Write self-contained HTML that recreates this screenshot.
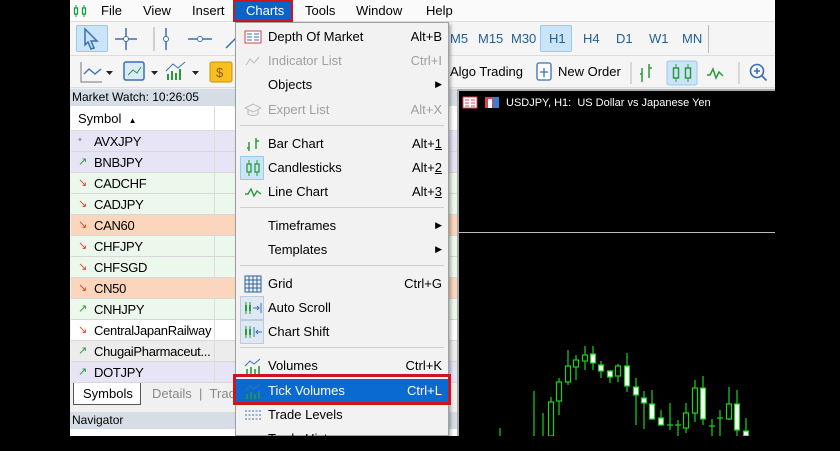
<!DOCTYPE html><html><head><style>
*{margin:0;padding:0;box-sizing:border-box}
body{width:840px;height:436px;background:#000;position:relative;overflow:hidden;font-family:"Liberation Sans","DejaVu Sans",sans-serif;font-size:13px;color:#000}
.a{position:absolute}
.app{left:70px;top:0;width:705px;height:436px;background:#f0f0f0}
.mi{top:3px;font-size:13px}
.row{left:71px;width:386px;height:21px;border-bottom:1px solid #d8d8d8}
.row span{position:absolute;left:23px;top:3px;letter-spacing:-0.3px}
.row i{position:absolute;left:7px;top:3px;font-style:normal;font-size:11px}
.up{color:#2a9a3a}.dn{color:#e0442a}
.menu{left:235px;top:22px;width:214px;height:414px;background:#f2f2f2;border:1px solid #a0a0a0;box-shadow:2px 2px 3px rgba(0,0,0,.3)}
.it{position:absolute;left:0;width:212px;height:24px}
.it .t{position:absolute;left:32px;top:4px}
.it .k{position:absolute;right:6px;top:4px}
.dis{color:#a0a0a0}
.sep{position:absolute;left:4px;width:204px;height:1px;background:#cfcfcf}
.tf{top:26px;height:26px;font-size:13px;color:#1f5f96;padding:5px 6px}
</style></head><body>
<div class="a app"></div>
<div class="a" style="left:70px;top:0;width:705px;height:22px;background:#fafafa;border-bottom:1px solid #ddd"></div>
<svg class="a" style="left:73px;top:4px" width="16" height="14"><path d="M3 1v12M11 1v12" stroke="#1a9a3a"/><rect x="1.5" y="4" width="3" height="6" fill="#fff" stroke="#1a9a3a" stroke-width="1.3"/><rect x="9.5" y="4" width="3" height="6" fill="#fff" stroke="#1a9a3a" stroke-width="1.3"/></svg>
<div class="a mi" style="left:101px">File</div>
<div class="a mi" style="left:143px">View</div>
<div class="a mi" style="left:192px">Insert</div>
<div class="a" style="left:233px;top:0;width:60px;height:22px;background:#0a64c8;border:2px solid #d0141e"></div>
<div class="a mi" style="left:246px;color:#fff">Charts</div>
<div class="a mi" style="left:305px">Tools</div>
<div class="a mi" style="left:356px">Window</div>
<div class="a mi" style="left:426px">Help</div>
<div class="a" style="left:70px;top:22px;width:705px;height:34px;background:#f5f5f5;border-bottom:1px solid #ddd"></div>
<div class="a" style="left:76px;top:25px;width:32px;height:27px;background:#cce4f7;border:1px solid #99c9ef;border-radius:2px"></div>
<svg class="a" style="left:70px;top:22px" width="170" height="34"><path d="M15 7 L27 19 L21 19 L24 26 L21 27 L18 20 L15 23Z" fill="none" stroke="#3a6fb0" stroke-width="1.5"/><path d="M56 6V28M45 17H67" stroke="#3a6fb0" stroke-width="1.5"/><circle cx="56" cy="17" r="2.5" fill="#fff" stroke="#3a6fb0"/><path d="M84 5V29" stroke="#aaa"/><path d="M96 6V28" stroke="#3a6fb0" stroke-width="1.5"/><circle cx="96" cy="17" r="2.5" fill="#fff" stroke="#3a6fb0"/><path d="M118 17H142" stroke="#3a6fb0" stroke-width="1.5"/><circle cx="130" cy="17" r="2.5" fill="#fff" stroke="#3a6fb0"/><path d="M156 26L168 14" stroke="#3a6fb0" stroke-width="1.5"/></svg>
<div class="a tf" style="left:444px">M5</div><div class="a tf" style="left:472px">M15</div><div class="a tf" style="left:505px">M30</div>
<div class="a" style="left:540px;top:25px;width:32px;height:27px;background:#cce4f7;border:1px solid #99c9ef;border-radius:2px"></div>
<div class="a tf" style="left:543px">H1</div><div class="a tf" style="left:577px">H4</div><div class="a tf" style="left:610px">D1</div><div class="a tf" style="left:643px">W1</div><div class="a tf" style="left:676px">MN</div>
<div class="a" style="left:708px;top:25px;width:1px;height:28px;background:#bbb"></div>
<div class="a" style="left:70px;top:56px;width:705px;height:32px;background:#f5f5f5;border-bottom:1px solid #ddd"></div>
<svg class="a" style="left:70px;top:56px" width="170" height="32"><path d="M11 6V26H32" stroke="#777" fill="none"/><path d="M14 18L19 13L25 18L31 13" stroke="#3a6fb0" fill="none" stroke-width="1.3"/><path d="M36 15h7l-3.5 4z" fill="#222"/><rect x="54" y="6" width="20" height="18" rx="2" fill="#dceaf7" stroke="#3a6fb0" stroke-width="1.5"/><path d="M58 19L63 14L67 17L71 11" stroke="#2a9a3a" fill="none"/><path d="M81 15h7l-3.5 4z" fill="#222"/><path d="M98 24V18M102 24V15M106 24V17M110 24V13" stroke="#2a9a3a" stroke-width="2"/><path d="M96 15L103 8L108 12L115 6" stroke="#3a6fb0" fill="none"/><path d="M122 15h7l-3.5 4z" fill="#222"/><rect x="140" y="6" width="22" height="20" rx="2" fill="#f5c020" stroke="#d09000"/><text x="146" y="21" font-size="13" fill="#9a5a00" font-family="Liberation Sans">$</text></svg>
<div class="a" style="left:450px;top:64px">Algo Trading</div>
<svg class="a" style="left:535px;top:60px" width="240" height="26"><rect x="2" y="3" width="14" height="17" rx="2" fill="#fff" stroke="#3a6fb0" stroke-width="1.3"/><path d="M9 8v9M5 12h8" stroke="#3a6fb0" stroke-width="1.3"/><path d="M96 2v22" stroke="#bbb"/><path d="M107 8v14M105 14h2M114 4v14M114 8h3" stroke="#2a9a3a" stroke-width="1.5"/><rect x="132" y="1" width="30" height="24" rx="2" fill="#cce4f7" stroke="#99c9ef"/><path d="M141 4v18M153 4v18" stroke="#2a9a3a"/><rect x="138.5" y="8" width="5" height="10" fill="#cce4f7" stroke="#2a9a3a" stroke-width="1.5"/><rect x="150.5" y="8" width="5" height="10" fill="#cce4f7" stroke="#2a9a3a" stroke-width="1.5"/><path d="M172 15h3l3-6l3 9l3-6l4 4" stroke="#2a9a3a" fill="none" stroke-width="1.5"/><path d="M204 2v22" stroke="#bbb"/><circle cx="222" cy="11" r="6.5" fill="none" stroke="#3a6fb0" stroke-width="1.6"/><path d="M226.5 15.5l5 5M219 11h6M222 8v6" stroke="#3a6fb0" stroke-width="1.6"/></svg>
<div class="a" style="left:558px;top:64px">New Order</div>
<div class="a" style="left:70px;top:89px;width:387px;height:17px;background:#d6dde6"></div>
<div class="a" style="left:72px;top:90px;font-size:12px">Market Watch: 10:26:05</div>
<div class="a" style="left:71px;top:106px;width:386px;height:25px;background:#fff;border-bottom:1px solid #ddd"></div>
<div class="a" style="left:78px;top:111px">Symbol &nbsp;<span style="font-size:8px">▲</span></div>
<div class="a row" style="top:131px;background:#e6e4f5"><i style="color:#999">•</i><span>AVXJPY</span></div>
<div class="a row" style="top:152px;background:#e6e4f5"><i class="up">↗</i><span>BNBJPY</span></div>
<div class="a row" style="top:173px;background:#edf8ed"><i class="dn">↘</i><span>CADCHF</span></div>
<div class="a row" style="top:194px;background:#edf8ed"><i class="dn">↘</i><span>CADJPY</span></div>
<div class="a row" style="top:215px;background:#fbd6bc"><i class="dn">↘</i><span>CAN60</span></div>
<div class="a row" style="top:236px;background:#edf8ed"><i class="dn">↘</i><span>CHFJPY</span></div>
<div class="a row" style="top:257px;background:#edf8ed"><i class="dn">↘</i><span>CHFSGD</span></div>
<div class="a row" style="top:278px;background:#fbd6bc"><i class="dn">↘</i><span>CN50</span></div>
<div class="a row" style="top:299px;background:#edf8ed"><i class="up">↗</i><span>CNHJPY</span></div>
<div class="a row" style="top:320px;background:#fff"><i class="dn">↘</i><span>CentralJapanRailway</span></div>
<div class="a row" style="top:341px;background:#ececec"><i class="up">↗</i><span>ChugaiPharmaceut...</span></div>
<div class="a row" style="top:362px;background:#e6e4f5"><i class="up">↗</i><span>DOTJPY</span></div>
<div class="a" style="left:214px;top:106px;width:1px;height:277px;background:#ddd"></div>
<div class="a" style="left:70px;top:383px;width:387px;height:24px;background:#f0f0f0"></div>
<div class="a" style="left:73px;top:383px;width:68px;height:22px;background:#fff;border:1px solid #555;border-top:none"></div>
<div class="a" style="left:83px;top:386px">Symbols</div>
<div class="a" style="left:152px;top:386px;color:#888">Details &nbsp;| &nbsp;Trad</div>
<div class="a" style="left:70px;top:412px;width:387px;height:17px;background:#d6dde6"></div>
<div class="a" style="left:72px;top:413px;font-size:12px">Navigator</div>
<div class="a" style="left:70px;top:429px;width:387px;height:7px;background:#fff"></div>
<div class="a" style="left:457px;top:89px;width:318px;height:347px;background:#000;border-left:2px solid #aaa;border-top:2px solid #aaa"></div>
<div class="a" style="left:459px;top:232px;width:316px;height:1px;background:#bbb"></div>
<svg class="a" style="left:462px;top:96px" width="40" height="14"><rect x="1" y="1" width="14" height="11" fill="#fff" stroke="#e04050"/><path d="M3 4h4M3 7h4M3 10h4M9 4h4M9 7h4M9 10h4" stroke="#e04050"/><rect x="23" y="1" width="14" height="11" fill="#e04050"/><rect x="26" y="3" width="4" height="9" fill="#fff"/><rect x="31" y="1" width="6" height="11" fill="#3a7fd0"/></svg>
<div class="a" style="left:506px;top:97px;color:#fff;font-size:11px">USDJPY, H1: &nbsp;US Dollar vs Japanese Yen</div>
<svg class="a" style="left:0;top:0" width="840" height="436" fill="none" stroke="#1dd11d" stroke-width="1.2">
<path d="M500 428v8M534 391v45M543 413v23M551 397v39M559 378v37M568 350v35M576 355v25M585 346v24M593 346v24M601 361v17M610 370v13M618 364v18M627 353v39M636 378v47M644 391v38M652 390v30M661 410v14M670 403v27M678 420v16M686 403v30M695 380v42M703 376v49M712 419v17M720 410v26M729 387v33M737 390v46M746 418v18"/>
<g fill="#000"><rect x="548.5" y="402" width="5" height="34"/><rect x="556.5" y="382" width="5" height="19"/><rect x="565.5" y="366" width="5" height="16"/><rect x="573.5" y="360" width="5" height="7"/><rect x="582.5" y="355" width="5" height="6"/><rect x="615.5" y="366" width="5" height="10"/><rect x="683.5" y="413" width="5" height="15"/><rect x="692.5" y="388" width="5" height="25"/><rect x="726.5" y="404" width="5" height="15"/></g>
<g fill="#fff"><rect x="590.5" y="354" width="5" height="9"/><rect x="598.5" y="365" width="5" height="6"/><rect x="607.5" y="371" width="5" height="6"/><rect x="624.5" y="366" width="5" height="20"/><rect x="633.5" y="387" width="5" height="8"/><rect x="641.5" y="398" width="5" height="5"/><rect x="649.5" y="404" width="5" height="15"/><rect x="658.5" y="418" width="5" height="7"/><rect x="700.5" y="388" width="5" height="31"/><rect x="734.5" y="404" width="5" height="26"/><rect x="743.5" y="431" width="5" height="5"/></g>
<path d="M667 425h6M675 425h6M709 426h6M717 418h6"/>
</svg>
<div class="a menu">
<div class="it" style="top:2px"><svg class="a" style="left:8px;top:5px" width="18" height="14"><rect x="1" y="1" width="16" height="12" fill="#fff" stroke="#d04050"/><path d="M3 4h5M3 7h5M3 10h5M10 4h5M10 7h5M10 10h5" stroke="#3a6fb0"/></svg><span class="t">Depth Of Market</span><span class="k">Alt+B</span></div>
<div class="it dis" style="top:26px"><svg class="a" style="left:9px;top:6px" width="16" height="12"><path d="M1 10l4-6l4 4l5-6" stroke="#bbb" fill="none"/></svg><span class="t">Indicator List</span><span class="k">Ctrl+I</span></div>
<div class="it" style="top:50px"><span class="t">Objects</span><span class="k" style="font-size:9px;top:6px">▶</span></div>
<div class="it dis" style="top:75px"><svg class="a" style="left:8px;top:5px" width="18" height="14"><path d="M1 5l8-4l8 4l-8 4z" fill="none" stroke="#bbb"/><path d="M4 7v4c3 2 7 2 10 0V7" fill="none" stroke="#bbb"/></svg><span class="t">Expert List</span><span class="k">Alt+X</span></div>
<div class="sep" style="top:102px"></div>
<div class="it" style="top:109px"><svg class="a" style="left:8px;top:4px" width="18" height="16"><path d="M5 6v9M3 12h2M12 2v11M12 5h3" stroke="#2a9a3a" stroke-width="1.5"/></svg><span class="t">Bar Chart</span><span class="k">Alt+<u>1</u></span></div>
<div class="it" style="top:133px"><div class="a" style="left:4px;top:0;width:24px;height:24px;background:#cce4f7;border:1px solid #99c9ef"></div><svg class="a" style="left:8px;top:3px" width="18" height="18"><path d="M5 1v16M13 1v16" stroke="#2a9a3a"/><rect x="3" y="5" width="4" height="8" fill="#cce4f7" stroke="#2a9a3a" stroke-width="1.3"/><rect x="11" y="5" width="4" height="8" fill="#cce4f7" stroke="#2a9a3a" stroke-width="1.3"/></svg><span class="t">Candlesticks</span><span class="k">Alt+<u>2</u></span></div>
<div class="it" style="top:157px"><svg class="a" style="left:8px;top:4px" width="18" height="16"><path d="M1 10h3l3-5l3 7l3-5l4 3" stroke="#2a9a3a" fill="none" stroke-width="1.4"/></svg><span class="t">Line Chart</span><span class="k">Alt+<u>3</u></span></div>
<div class="sep" style="top:184px"></div>
<div class="it" style="top:191px"><span class="t">Timeframes</span><span class="k" style="font-size:9px;top:6px">▶</span></div>
<div class="it" style="top:215px"><span class="t">Templates</span><span class="k" style="font-size:9px;top:6px">▶</span></div>
<div class="sep" style="top:242px"></div>
<div class="it" style="top:249px"><svg class="a" style="left:8px;top:3px" width="18" height="18"><path d="M1 1h16v16H1zM1 5h16M1 9h16M1 13h16M5 1v16M9 1v16M13 1v16" stroke="#2a5fa0" fill="none"/></svg><span class="t">Grid</span><span class="k">Ctrl+G</span></div>
<div class="it" style="top:273px"><div class="a" style="left:4px;top:0;width:24px;height:24px;background:#dde8f2;border:1px solid #bcd"></div><svg class="a" style="left:7px;top:4px" width="20" height="16"><path d="M3 2v12M7 2v12" stroke="#2a9a3a"/><rect x="2" y="5" width="2" height="6" fill="#2a9a3a"/><rect x="6" y="5" width="2" height="6" fill="#2a9a3a"/><path d="M10 8h6M14 6l2 2l-2 2M18 3v10" stroke="#3a6fb0" fill="none"/></svg><span class="t">Auto Scroll</span></div>
<div class="it" style="top:297px"><div class="a" style="left:4px;top:0;width:24px;height:24px;background:#dde8f2;border:1px solid #bcd"></div><svg class="a" style="left:7px;top:4px" width="20" height="16"><path d="M3 2v12M7 2v12" stroke="#2a9a3a"/><rect x="2" y="5" width="2" height="6" fill="#2a9a3a"/><rect x="6" y="5" width="2" height="6" fill="#2a9a3a"/><path d="M11 3v10M13 8h6M15 6l-2 2l2 2" stroke="#3a6fb0" fill="none"/></svg><span class="t">Chart Shift</span></div>
<div class="sep" style="top:324px"></div>
<div class="it" style="top:331px"><svg class="a" style="left:8px;top:3px" width="18" height="18"><path d="M3 17v-5M7 17v-7M11 17v-5M15 17v-8" stroke="#2a9a3a" stroke-width="1.6"/><path d="M1 9l5-5l4 3l6-5" stroke="#3a6fb0" fill="none"/></svg><span class="t">Volumes</span><span class="k">Ctrl+K</span></div>
<div class="it" style="top:356px;background:#0a6ad0;height:23px;color:#fff"><svg class="a" style="left:8px;top:3px" width="18" height="18"><path d="M3 17v-5M7 17v-7M11 17v-5M15 17v-8" stroke="#2a9a3a" stroke-width="1.6"/><path d="M1 9l5-5l4 3l6-5" stroke="#3a6fb0" fill="none"/></svg><span class="t">Tick Volumes</span><span class="k">Ctrl+L</span></div>
<div class="it" style="top:380px"><svg class="a" style="left:8px;top:6px" width="18" height="12"><path d="M1 2h16M1 6h16M1 10h16" stroke="#3a6fb0" stroke-dasharray="2 1.5"/></svg><span class="t">Trade Levels</span></div>
<div class="it" style="top:404px"><span class="t">Trade History</span></div>
</div>
<div class="a" style="left:233px;top:374px;width:218px;height:31px;border:3px solid #d0141e"></div>
</body></html>
